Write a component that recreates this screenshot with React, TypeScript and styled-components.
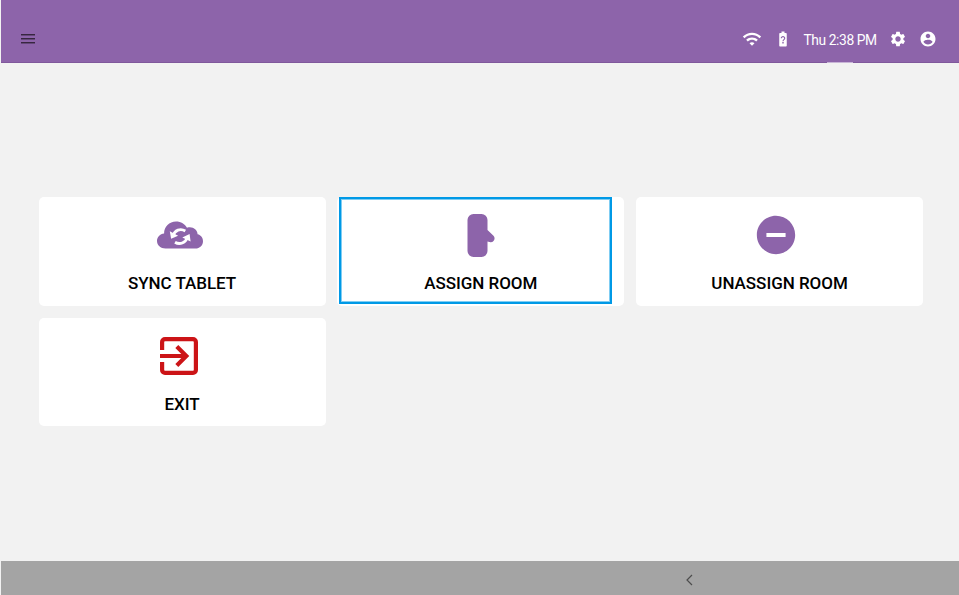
import React from "react";
import styled, { createGlobalStyle } from "styled-components";

const GlobalStyle = createGlobalStyle`
  * { box-sizing: border-box; }
  body { margin: 0; background: #f2f2f2; font-family: Roboto, "Liberation Sans", sans-serif; }
`;

const Screen = styled.div`
  display: flex;
  flex-direction: column;
  height: 595px;
  width: 959px;
  padding-left: 1px;
  background: #f2f2f2;
  overflow: hidden;
`;

const TopBar = styled.header`
  position: relative;
  display: flex;
  align-items: center;
  height: 63px;
  flex: none;
  padding: 15px 22px 0 20px;
  background: #8d64aa;
  border-bottom: 1px solid #80589c;
  color: #fff;
`;

const Handle = styled.span`
  position: absolute;
  left: 826px;
  bottom: -1px;
  width: 26px;
  height: 1px;
  background: #c9b5d7;
`;

const MenuButton = styled.button`
  display: flex;
  flex-direction: column;
  gap: 2px;
  width: 14px;
  padding: 0;
  border: 0;
  background: none;
  margin-right: auto;
`;

const MenuLine = styled.span`
  height: 2px;
  background: linear-gradient(#37263f 50%, #644779 50%);
`;

const StatusIcon = styled.svg<{ $gap: number }>`
  display: block;
  flex: none;
  margin-left: ${(p) => p.$gap}px;
`;

const Clock = styled.time`
  margin-left: 11.5px;
  width: 74.5px;
  padding-top: 2px;
  font-size: 13.8px;
  line-height: 16px;
  white-space: nowrap;
  letter-spacing: -0.4px;
`;

const Main = styled.main`
  flex: 1;
  padding: 134.4px 0 0 37.5px;
`;

const Grid = styled.div`
  display: grid;
  grid-template-columns: repeat(3, 287px);
  grid-auto-rows: 108.5px;
  gap: 12px 11.8px;
`;

const Card = styled.button`
  position: relative;
  display: flex;
  flex-direction: column;
  align-items: center;
  padding: 14px 0 0;
  border: 0;
  border-radius: 5px;
  background: #fff;
  color: #000;
  font-family: inherit;
`;

const IconSlot = styled.span<{ $shift: number }>`
  display: flex;
  align-items: center;
  justify-content: center;
  height: 48px;
  margin-left: ${(p) => p.$shift}px;
`;

const Label = styled.span`
  margin-top: 14px;
  font-size: 17px;
  line-height: 20px;
  font-weight: 500;
  letter-spacing: -0.03px;
  white-space: nowrap;
`;

const FocusFrame = styled.span`
  position: absolute;
  left: 1.5px;
  top: -0.4px;
  width: 273.2px;
  height: 107px;
  border: 2px solid #0099e6;
  box-shadow: inset 0 0 0 1px #7fcdf3;
`;

const NavBar = styled.footer`
  display: flex;
  align-items: center;
  height: 34px;
  flex: none;
  padding: 4px 0 0 684px;
  background: #a4a4a4;
`;

const CloudSync = () => (
  <svg width="46" height="28" viewBox="0 0 46 28">
    <path
      fill="#8d64aa"
      d="M8.500 27.500C3.600 27.500 0 24.200 0 20c0-4 3-7 7.100-7.500C7 5.800 12.300.500 19 .5c5 0 9 2.600 11 6.300 5.200-1.800 10.400 1.600 10.600 6.500C44 14 46 17 46 20.200c0 4.300-3.400 7.300-7.500 7.300z"
    />
    <g fill="none" stroke="#fff" strokeWidth="2.800">
      <path d="M16.300 14.500C17.500 9.200 23.500 7 28.300 10" />
      <path d="M30.200 16.500C28.800 22 22.500 24 18 21.200" />
    </g>
    <path fill="#fff" d="M12.800 10.200l1.300 7.600 7-3zM33.600 20.600l-1-7.600-7.300 3.600z" />
  </svg>
);

const Door = () => (
  <svg width="28" height="43" viewBox="0 0 28 43">
    <path
      fill="#8d64aa"
      d="M6.500 0h8a6 6 0 0 1 6 6v10l6 5.700c2.400 2.400.5 6.800-3 6.600l-3-.7V37a6 6 0 0 1-6 6h-8a6 6 0 0 1-6-6V6a6 6 0 0 1 6-6z"
    />
  </svg>
);

const MinusCircle = () => (
  <svg width="46" height="46" viewBox="0 0 24 24">
    <path
      fill="#8d64aa"
      d="M12 2C6.480 2 2 6.480 2 12s4.480 10 10 10 10-4.480 10-10S17.520 2 12 2zm5 11H7v-2h10v2z"
    />
  </svg>
);

const Exit = () => (
  <svg width="38" height="38" viewBox="0 0 38 38" fill="none" stroke="#cc1417" strokeWidth="4.200">
    <path d="M2.100 13V5a2.900 2.900 0 0 1 2.900-2.900h28A2.900 2.900 0 0 1 35.900 5v28a2.900 2.900 0 0 1-2.900 2.900H5A2.900 2.900 0 0 1 2.100 33v-8" />
    <path d="M0 19h25M16.800 9.500L26.300 19l-9.500 9.500" />
  </svg>
);

const tiles = [
  { label: "SYNC TABLET", Icon: CloudSync, shift: -5, focused: false },
  { label: "ASSIGN ROOM", Icon: Door, shift: 1, focused: true },
  { label: "UNASSIGN ROOM", Icon: MinusCircle, shift: -7, focused: false },
  { label: "EXIT", Icon: Exit, shift: -6, focused: false },
];

export default function App() {
  return (
    <>
      <GlobalStyle />
      <Screen>
        <TopBar>
          <MenuButton aria-label="Menu">
            <MenuLine />
            <MenuLine />
            <MenuLine />
          </MenuButton>
          <StatusIcon $gap={0} width="20" height="20" viewBox="0 0 24 24" fill="#fff">
            <path d="M1 9l2 2c4.970-4.970 13.030-4.970 18 0l2-2C16.930 2.930 7.080 2.930 1 9zm8 8l3 3 3-3c-1.650-1.660-4.340-1.660-6 0zm-4-4l2 2c2.760-2.760 7.240-2.760 10 0l2-2C15.140 9.140 8.870 9.140 5 13z" />
          </StatusIcon>
          <StatusIcon $gap={12} width="18" height="18" viewBox="0 0 24 24" fill="#fff">
            <path d="M15.670 4H14V2h-4v2H8.330C7.600 4 7 4.600 7 5.330v15.330C7 21.400 7.600 22 8.330 22h7.330c.74 0 1.340-.6 1.340-1.330V5.330C17 4.600 16.400 4 15.670 4zm-2.720 13.950h-1.900v-1.900h1.900v1.900zm1.350-5.260s-.38.420-.67.710c-.48.480-.83 1.150-.83 1.600h-1.600c0-.83.460-1.520.93-2l.93-.94c.27-.27.440-.65.440-1.060 0-.83-.67-1.500-1.500-1.500s-1.500.67-1.500 1.500H9c0-1.660 1.340-3 3-3s3 1.340 3 3c0 .66-.27 1.260-.7 1.690z" />
          </StatusIcon>
          <Clock>Thu 2:38 PM</Clock>
          <StatusIcon $gap={11} width="18" height="18" viewBox="0 0 24 24" fill="#fff">
            <path d="M19.140 12.940c.04-.3.060-.61.060-.94 0-.32-.02-.64-.07-.94l2.030-1.580c.18-.14.230-.41.120-.61l-1.920-3.320c-.12-.22-.37-.29-.59-.22l-2.390.96c-.5-.38-1.030-.7-1.620-.94l-.36-2.540c-.04-.24-.24-.41-.48-.41h-3.840c-.24 0-.43.170-.47.410l-.36 2.540c-.59.240-1.130.570-1.620.94l-2.390-.96c-.22-.08-.47 0-.59.220L2.740 8.870c-.12.210-.08.470.12.610l2.030 1.580c-.05.300-.09.630-.09.940s.02.640.07.940l-2.030 1.580c-.18.140-.23.410-.12.610l1.920 3.320c.12.220.37.290.59.220l2.390-.96c.5.380 1.030.7 1.620.94l.36 2.540c.05.240.24.410.48.410h3.840c.24 0 .44-.17.470-.41l.36-2.540c.59-.24 1.130-.56 1.620-.94l2.390.96c.22.080.47 0 .59-.22l1.920-3.320c.12-.22.070-.47-.12-.61l-2.010-1.580zM12 15.600c-1.980 0-3.600-1.620-3.600-3.600s1.620-3.600 3.600-3.600 3.600 1.620 3.600 3.600-1.620 3.600-3.600 3.600z" />
          </StatusIcon>
          <StatusIcon $gap={12} width="18" height="18" viewBox="0 0 24 24" fill="#fff">
            <path d="M12 2C6.480 2 2 6.480 2 12s4.480 10 10 10 10-4.480 10-10S17.520 2 12 2zm0 3c1.660 0 3 1.340 3 3s-1.340 3-3 3-3-1.340-3-3 1.340-3 3-3zm0 14.200c-2.500 0-4.710-1.280-6-3.220.03-1.990 4-3.080 6-3.080 1.990 0 5.970 1.090 6 3.080-1.290 1.940-3.500 3.220-6 3.220z" />
          </StatusIcon>
          <Handle />
        </TopBar>
        <Main>
          <Grid>
            {tiles.map(({ label, Icon, shift, focused }) => (
              <Card key={label}>
                <IconSlot $shift={shift}>
                  <Icon />
                </IconSlot>
                <Label>{label}</Label>
                {focused && <FocusFrame />}
              </Card>
            ))}
          </Grid>
        </Main>
        <NavBar>
          <svg width="8" height="12" viewBox="0 0 8 12" fill="none" stroke="#4d4d4d" strokeWidth="1.200">
            <path d="M7 1L2 6l5 5" />
          </svg>
        </NavBar>
      </Screen>
    </>
  );
}
